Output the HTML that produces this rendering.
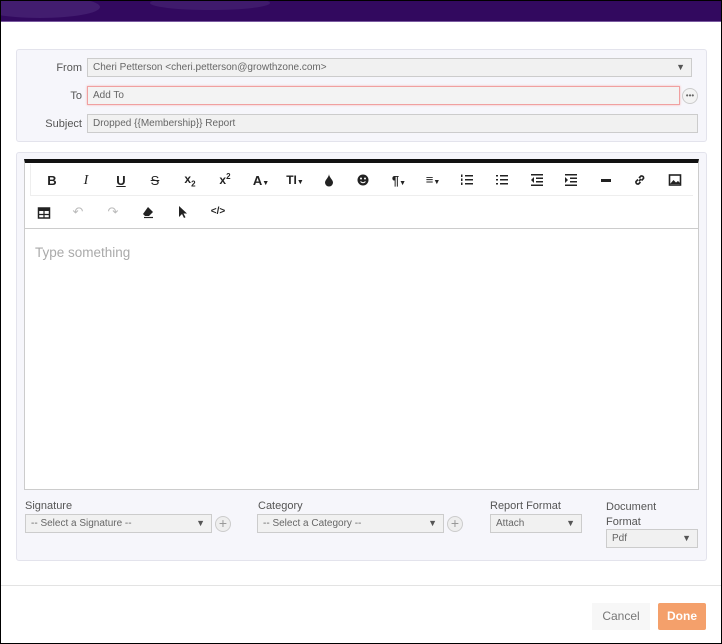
<!DOCTYPE html>
<html><head><meta charset="utf-8"><style>
*{box-sizing:border-box;margin:0;padding:0}
body{width:722px;height:644px;background:#fff;font-family:"Liberation Sans",sans-serif;position:relative;overflow:hidden}
.frame{position:absolute;left:0;top:0;width:722px;height:644px;border:1px solid #000;pointer-events:none;z-index:5}
.hdr{position:absolute;left:0;top:0;width:722px;height:22px;background:#32095f;border-bottom:1px solid #7a5aa0;overflow:hidden}
.hdr i{position:absolute;top:-4px;height:22px;background:#4c2c7a;border-radius:50%}
.panel{position:absolute;left:16px;width:691px;background:#f6f6fb;border:1px solid #e3e3ec;border-radius:3px}
.lbl{position:absolute;font-size:11px;color:#555;text-align:right;width:66px}
.inp{position:absolute;height:19px;border:1px solid #ccc;background:#f1f1f1;font-size:10px;color:#666;padding:0 5px;line-height:17px}
.arr{position:absolute;right:6px;top:0;font-size:9px;color:#555}
.ed{position:absolute;left:24px;top:159px;width:675px;height:331px;background:#fff;border:1px solid #ccc;border-top:4px solid #111}
.tb{position:absolute;font-size:13px;color:#222;text-align:center;width:20px;font-weight:bold}
.blbl{position:absolute;font-size:11px;color:#555}
.plus{position:absolute;width:16px;height:16px;border:1px solid #ccc;border-radius:50%;background:#eee;color:#999;font-size:14px;line-height:13px;text-align:center}
svg.ic{position:absolute;width:14px;height:14px}
</style></head><body>
<div class="frame"></div>
<div class="hdr"><i style="left:-20px;width:120px;opacity:.6"></i><i style="left:150px;width:120px;opacity:.5;height:14px"></i></div>

<div class="panel" style="top:49px;height:93px"></div>
<div class="lbl" style="left:16px;top:62px">From</div>
<div class="inp" style="left:87px;top:58px;width:605px">Cheri Petterson &lt;cheri.petterson@growthzone.com&gt;<span class="arr">▼</span></div>
<div class="lbl" style="left:16px;top:90px">To</div>
<div class="inp" style="left:87px;top:86px;width:593px;border:1px solid #f0a0a0;background:#f3f3f3;box-shadow:0 0 2px #f4b0b0">Add To</div>
<div style="position:absolute;left:682px;top:88px;width:16px;height:16px;border:1px solid #ccc;border-radius:50%;background:#f3f3f3;font-size:8px;line-height:13px;text-align:center;color:#666">•••</div>
<div class="lbl" style="left:16px;top:118px">Subject</div>
<div class="inp" style="left:87px;top:114px;width:611px">Dropped {{Membership}} Report</div>

<div class="panel" style="top:152px;height:409px"></div>
<div class="ed">
 <div style="position:absolute;left:5px;top:1px;width:663px;height:32px;border-left:1px solid #eee;border-bottom:1px solid #eee"></div>
 <div style="position:absolute;left:0;top:65px;width:673px;border-top:1px solid #ccc"></div>
 <div style="position:absolute;left:10px;top:82px;font-size:13.5px;color:#aaa">Type something</div>
</div>
<div class="tb" style="left:42px;top:173px">B</div>
<div class="tb" style="left:76px;top:173px;font-style:italic;font-family:'Liberation Serif';font-weight:normal;font-size:14px">I</div>
<div class="tb" style="left:111px;top:173px;text-decoration:underline">U</div>
<div class="tb" style="left:145px;top:173px;text-decoration:line-through;font-weight:normal">S</div>
<div class="tb" style="left:180px;top:172px;font-size:12px">x<sub style="font-size:8px">2</sub></div>
<div class="tb" style="left:215px;top:172px;font-size:12px">x<sup style="font-size:8px">2</sup></div>
<div class="tb" style="left:248px;top:173px;width:26px">A<span style="font-size:7px">▼</span></div>
<div class="tb" style="left:282px;top:173px;width:26px;font-size:12px">TI<span style="font-size:7px">▼</span></div>
<svg class="ic" style="left:322px;top:173px" viewBox="0 0 14 14"><path d="M7 1 C7 4 3 7 3 9.5 A4 4 0 0 0 11 9.5 C11 7 7 4 7 1Z" fill="#222"/></svg>
<svg class="ic" style="left:356px;top:173px" viewBox="0 0 14 14"><circle cx="7" cy="7" r="5.5" fill="#222"/><circle cx="5" cy="5.5" r="1" fill="#fff"/><circle cx="9" cy="5.5" r="1" fill="#fff"/><path d="M4.5 8.5 Q7 11 9.5 8.5" stroke="#fff" fill="none"/></svg>
<div class="tb" style="left:386px;top:173px;width:26px">¶<span style="font-size:7px">▼</span></div>
<div class="tb" style="left:420px;top:172px;width:26px">≡<span style="font-size:7px">▼</span></div>
<svg class="ic" style="left:460px;top:173px" viewBox="0 0 14 14" fill="#222"><rect x="5" y="2" width="8" height="1.5"/><rect x="5" y="6" width="8" height="1.5"/><rect x="5" y="10" width="8" height="1.5"/><rect x="1" y="1.5" width="1.5" height="2.5"/><rect x="1" y="5.5" width="1.5" height="2.5"/><rect x="1" y="9.5" width="1.5" height="2.5"/></svg>
<svg class="ic" style="left:495px;top:173px" viewBox="0 0 14 14" fill="#222"><rect x="5" y="2" width="8" height="1.5"/><rect x="5" y="6" width="8" height="1.5"/><rect x="5" y="10" width="8" height="1.5"/><rect x="1" y="2" width="2" height="1.5"/><rect x="1" y="6" width="2" height="1.5"/><rect x="1" y="10" width="2" height="1.5"/></svg>
<svg class="ic" style="left:530px;top:173px" viewBox="0 0 14 14" fill="#222"><rect x="1" y="1" width="12" height="1.5"/><rect x="6" y="4.5" width="7" height="1.5"/><rect x="6" y="8" width="7" height="1.5"/><rect x="1" y="11.5" width="12" height="1.5"/><path d="M4 4 L1 7 L4 10Z"/></svg>
<svg class="ic" style="left:564px;top:173px" viewBox="0 0 14 14" fill="#222"><rect x="1" y="1" width="12" height="1.5"/><rect x="6" y="4.5" width="7" height="1.5"/><rect x="6" y="8" width="7" height="1.5"/><rect x="1" y="11.5" width="12" height="1.5"/><path d="M1 4 L4 7 L1 10Z"/></svg>
<div style="position:absolute;left:601px;top:179px;width:10px;height:3px;background:#222"></div>
<svg class="ic" style="left:633px;top:173px" viewBox="0 0 14 14"><path d="M6 8 L8 6 M5 6.5 L3 8.5 A2 2 0 0 0 5.5 11 L7.5 9 M8.5 7.5 L10.5 5.5 A2 2 0 0 0 8 3 L6 5" stroke="#222" stroke-width="1.6" fill="none"/></svg>
<svg class="ic" style="left:668px;top:173px" viewBox="0 0 14 14"><rect x="1.5" y="2" width="11" height="10" fill="none" stroke="#222" stroke-width="1.6"/><path d="M2 11 L5.5 7 L8 9.5 L10 8 L12 10 V11Z" fill="#222"/></svg>
<svg class="ic" style="left:37px;top:206px" viewBox="0 0 14 14"><rect x="1.5" y="2" width="11" height="10" fill="none" stroke="#222" stroke-width="1.5"/><rect x="1.5" y="2" width="11" height="3" fill="#222"/><path d="M7 5 V12 M1.5 8.5 H12.5" stroke="#222" stroke-width="1.2"/></svg>
<div class="tb" style="left:68px;top:204px;color:#bbb;font-weight:normal">↶</div>
<div class="tb" style="left:103px;top:204px;color:#bbb;font-weight:normal">↷</div>
<svg class="ic" style="left:141px;top:205px" viewBox="0 0 14 14"><path d="M7 2 L12 7 L8 11 H4 L2 9Z" fill="#222"/><path d="M3 12.5 H12" stroke="#222" stroke-width="1.2"/></svg>
<svg class="ic" style="left:176px;top:205px" viewBox="0 0 14 14"><path d="M3 1 L3 12 L6 9 L8 13 L9.5 12.3 L7.5 8.5 L11 8.5Z" fill="#222"/></svg>
<div class="tb" style="left:208px;top:206px;font-size:10px">&lt;/&gt;</div>

<div class="blbl" style="left:25px;top:500px">Signature</div>
<div class="inp" style="left:25px;top:514px;width:187px">-- Select a Signature --<span class="arr">▼</span></div>
<div class="plus" style="left:215px;top:516px">+</div>
<div class="blbl" style="left:258px;top:500px">Category</div>
<div class="inp" style="left:257px;top:514px;width:187px">-- Select a Category --<span class="arr">▼</span></div>
<div class="plus" style="left:447px;top:516px">+</div>
<div class="blbl" style="left:490px;top:500px">Report Format</div>
<div class="inp" style="left:490px;top:514px;width:92px">Attach<span class="arr">▼</span></div>
<div class="blbl" style="left:606px;top:500px;line-height:15px">Document<br>Format</div>
<div class="inp" style="left:606px;top:529px;width:92px">Pdf<span class="arr">▼</span></div>

<div style="position:absolute;left:0;top:585px;width:722px;border-top:1px solid #e3e3e3"></div>
<div style="position:absolute;left:592px;top:603px;width:58px;height:27px;background:#f7f7f7;color:#777;font-size:12px;text-align:center;line-height:27px">Cancel</div>
<div style="position:absolute;left:658px;top:603px;width:48px;height:27px;background:#f4a06b;color:#fff;font-size:12px;font-weight:bold;text-align:center;line-height:27px;border-radius:2px">Done</div>
</body></html>
